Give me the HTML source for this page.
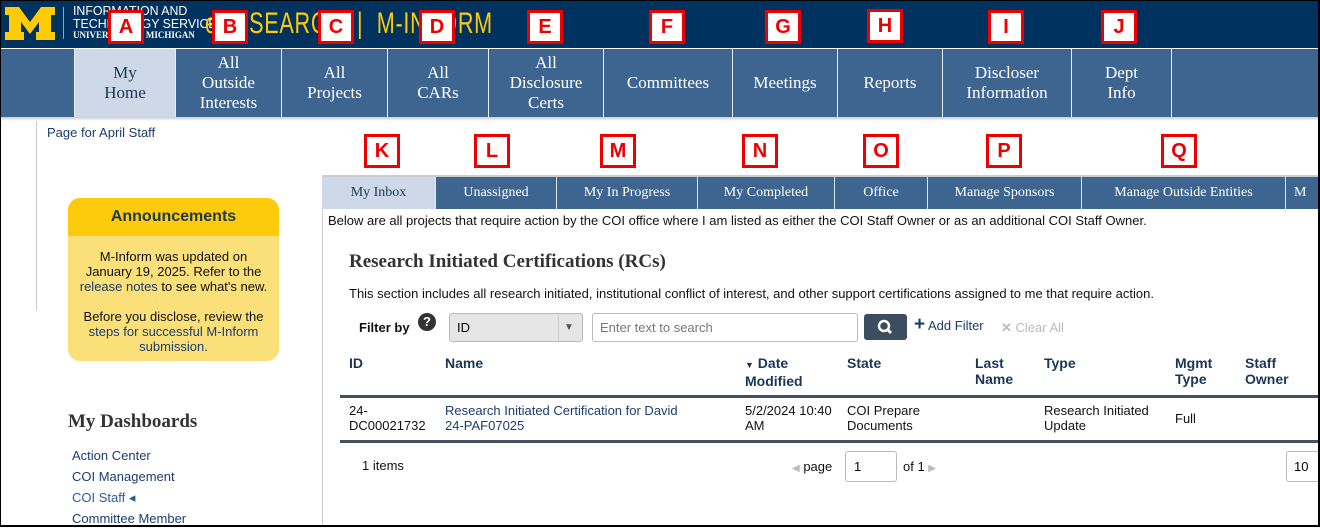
<!DOCTYPE html>
<html><head><meta charset="utf-8"><style>
*{margin:0;padding:0;box-sizing:border-box}
body{width:1320px;height:527px;overflow:hidden;background:#fff;font-family:"Liberation Sans",Arial,sans-serif;position:relative}
.a{position:absolute}
.hdr{left:0;top:0;width:1320px;height:48px;background:#00325f}
.nav{left:0;top:48px;width:1320px;height:69px;background:#3e6590;border-top:1px solid #fff}
.ni{position:absolute;top:0;height:68px;border-left:1px solid #e8eef5;color:#fff;font-family:"Liberation Serif",serif;font-size:17px;line-height:20px;display:flex;align-items:center;justify-content:center;text-align:center}
.lab{position:absolute;width:36px;height:34px;background:#fff;border:3px solid #e00;color:#e00;font-weight:bold;font-size:20px;display:flex;align-items:center;justify-content:center}
.tab{position:absolute;top:0;height:32px;border-left:1px solid #e0e6ee;color:#fff;font-family:"Liberation Serif",serif;font-size:14px;display:flex;align-items:center;justify-content:center}
.lnk{color:#1b3d6e}
</style></head><body>
<div class="a hdr"></div>
<svg class="a" style="left:5px;top:7px" width="50" height="33" viewBox="0 0 50 33"><path d="M0 0H14L25 15L36 0H50V8H46V25H50V33H31V25H34V15L25 27L16 15V25H19V33H0V25H4V8H0Z" fill="#ffcb05"/></svg>
<div class="a" style="left:63px;top:7px;width:1px;height:32px;background:#8aa"></div>
<div class="a" style="left:73px;top:4px;color:#fff;font-size:13px;line-height:13px;transform:scaleX(.95);transform-origin:left">INFORMATION AND<br>TECHNOLOGY SERVICES</div>
<div class="a" style="left:73px;top:30px;color:#fff;font-family:'Liberation Serif',serif;font-size:9px;font-weight:bold">UNIVERSITY OF MICHIGAN</div>
<div class="a" style="left:205px;top:6px;color:#ffcb05;font-size:30px;line-height:36px;transform:scaleX(.72);transform-origin:left;letter-spacing:1px">eRESEARCH&nbsp;&nbsp;|&nbsp;&nbsp;M-INFORM</div>
<div class="a nav">
<div class="ni" style="left:74px;width:101px;background:#cdd8e8;color:#1b3656">My<br>Home</div>
<div class="ni" style="left:175px;width:106px">All<br>Outside<br>Interests</div>
<div class="ni" style="left:281px;width:106px">All<br>Projects</div>
<div class="ni" style="left:387px;width:101px">All<br>CARs</div>
<div class="ni" style="left:488px;width:115px">All<br>Disclosure<br>Certs</div>
<div class="ni" style="left:603px;width:129px">Committees</div>
<div class="ni" style="left:732px;width:105px">Meetings</div>
<div class="ni" style="left:837px;width:105px">Reports</div>
<div class="ni" style="left:942px;width:129px">Discloser<br>Information</div>
<div class="ni" style="left:1071px;width:100px">Dept<br>Info</div>
<div class="ni" style="left:1171px;width:149px"></div>
</div>
<div class="a" style="left:0;top:117px;width:1320px;height:4px;background:linear-gradient(#ccc,#fff)"></div>
<div class="a" style="left:36px;top:121px;width:1px;height:190px;background:#ccc"></div>
<div class="a lnk" style="left:47px;top:125px;font-size:13px">Page for April Staff</div>
<div class="a" style="left:68px;top:198px;width:211px;height:163px;background:#fbe07a;border-radius:12px;overflow:hidden;text-align:center;font-size:13px;line-height:15px;color:#111">
<div style="background:#fecb0c;height:38px;line-height:38px;font-weight:bold;font-size:16px;color:#1b3656">Announcements</div>
<div style="padding-top:13px">M-Inform was updated on<br>January 19, 2025. Refer to the<br><span class="lnk">release notes</span> to see what's new.<br><br>Before you disclose, review the<br><span class="lnk">steps for successful M-Inform<br>submission.</span></div></div>
<div class="a" style="left:68px;top:411px;font-family:'Liberation Serif',serif;font-weight:bold;font-size:19px;color:#333">My Dashboards</div>
<div class="a lnk" style="left:72px;top:445px;font-size:13px;line-height:21px">Action Center<br>COI Management<br><span style="color:#2a5aa0">COI Staff ◂</span><br>Committee Member</div>
<div class="a" style="left:322px;top:175px;width:998px;height:2px;background:#ccc"></div>
<div class="a" style="left:322px;top:177px;width:1px;height:350px;background:#ccc"></div>
<div class="a" style="left:322px;top:177px;width:998px;height:32px;background:#3e6590">
<div class="tab" style="left:0;width:113px;background:#cdd8e8;color:#1b3656;border:none">My Inbox</div>
<div class="tab" style="left:113px;width:121px">Unassigned</div>
<div class="tab" style="left:234px;width:141px">My In Progress</div>
<div class="tab" style="left:375px;width:137px">My Completed</div>
<div class="tab" style="left:512px;width:93px">Office</div>
<div class="tab" style="left:605px;width:154px">Manage Sponsors</div>
<div class="tab" style="left:759px;width:204px">Manage Outside Entities</div>
<div class="tab" style="left:963px;width:40px;justify-content:flex-start;padding-left:8px">M</div>
</div>
<div class="a" style="left:328px;top:213px;font-size:13px;color:#111">Below are all projects that require action by the COI office where I am listed as either the COI Staff Owner or as an additional COI Staff Owner.</div>
<div class="a" style="left:349px;top:251px;font-family:'Liberation Serif',serif;font-weight:bold;font-size:19px;color:#333">Research Initiated Certifications (RCs)</div>
<div class="a" style="left:349px;top:286px;font-size:13px;color:#111">This section includes all research initiated, institutional conflict of interest, and other support certifications assigned to me that require action.</div>
<div class="a" style="left:359px;top:320px;font-size:13px;font-weight:bold;color:#111">Filter by</div>
<div class="a" style="left:418px;top:313px;width:18px;height:18px;border-radius:50%;background:#333;color:#fff;font-weight:bold;font-size:13px;text-align:center;line-height:18px">?</div>
<div class="a" style="left:449px;top:313px;width:134px;height:29px;background:#e6e6e6;border:1px solid #bbb;border-radius:3px;font-size:13px;line-height:27px;padding-left:7px">ID<span style="position:absolute;left:108px;top:0;width:1px;height:27px;background:#ccc"></span><span style="position:absolute;left:114px;font-size:10px;color:#555">▼</span></div>
<div class="a" style="left:592px;top:313px;width:266px;height:29px;border:1px solid #bbb;border-radius:3px;font-size:13px;line-height:27px;padding-left:7px;color:#777">Enter text to search</div>
<div class="a" style="left:864px;top:314px;width:43px;height:26px;background:#3b4d5e;border-radius:3px">
<svg width="43" height="26"><circle cx="20" cy="12" r="5" fill="none" stroke="#fff" stroke-width="2.5"/><line x1="23.5" y1="15.5" x2="27" y2="19" stroke="#fff" stroke-width="3"/></svg></div>
<div class="a" style="left:914px;top:318px;font-size:13px;color:#1b3d6e"><b style="font-size:19px;line-height:14px">+</b> Add Filter</div>
<div class="a" style="left:1001px;top:320px;font-size:13px;color:#bbb"><b>✕</b> Clear All</div>
<div class="a" style="left:349px;top:355px;font-size:14px;font-weight:bold;color:#1b3656;line-height:16px">
<span class="a" style="left:0">ID</span><span class="a" style="left:96px">Name</span><span class="a" style="left:396px;white-space:nowrap"><span style="font-size:9px">▼</span> Date<br>Modified</span><span class="a" style="left:498px">State</span><span class="a" style="left:626px">Last<br>Name</span><span class="a" style="left:695px">Type</span><span class="a" style="left:826px">Mgmt<br>Type</span><span class="a" style="left:896px">Staff<br>Owner</span></div>
<div class="a" style="left:340px;top:395px;width:980px;height:3px;background:#44525f"></div>
<div class="a" style="left:349px;top:403px;font-size:13px;color:#111;line-height:15px;white-space:nowrap">
<span class="a" style="left:0">24-<br>DC00021732</span><span class="a lnk" style="left:96px">Research Initiated Certification for David<br>24-PAF07025</span><span class="a" style="left:396px">5/2/2024 10:40<br>AM</span><span class="a" style="left:498px">COI Prepare<br>Documents</span><span class="a" style="left:695px">Research Initiated<br>Update</span><span class="a" style="left:826px;top:8px">Full</span></div>
<div class="a" style="left:340px;top:440px;width:980px;height:3px;background:#44525f"></div>
<div class="a" style="left:362px;top:458px;font-size:13px;color:#111">1 items</div>
<div class="a" style="left:792px;top:459px;font-size:13px;color:#111"><span style="color:#bbb;font-size:10px">◀</span> page</div>
<div class="a" style="left:845px;top:451px;width:52px;height:31px;border:1px solid #bbb;border-radius:3px;font-size:13px;line-height:29px;padding-left:8px">1</div>
<div class="a" style="left:903px;top:459px;font-size:13px;color:#111">of 1 <span style="color:#bbb;font-size:10px">▶</span></div>
<div class="a" style="left:1286px;top:451px;width:40px;height:31px;border:1px solid #bbb;border-radius:3px;font-size:13px;line-height:29px;padding-left:7px">10</div>
<div class="lab" style="left:108px;top:10px">A</div>
<div class="lab" style="left:212px;top:10px">B</div>
<div class="lab" style="left:318px;top:10px">C</div>
<div class="lab" style="left:419px;top:10px">D</div>
<div class="lab" style="left:527px;top:10px">E</div>
<div class="lab" style="left:649px;top:10px">F</div>
<div class="lab" style="left:765px;top:10px">G</div>
<div class="lab" style="left:867px;top:9px">H</div>
<div class="lab" style="left:988px;top:10px">I</div>
<div class="lab" style="left:1101px;top:10px">J</div>
<div class="lab" style="left:364px;top:134px">K</div>
<div class="lab" style="left:474px;top:134px">L</div>
<div class="lab" style="left:600px;top:134px">M</div>
<div class="lab" style="left:742px;top:134px">N</div>
<div class="lab" style="left:863px;top:134px">O</div>
<div class="lab" style="left:986px;top:134px">P</div>
<div class="lab" style="left:1161px;top:134px">Q</div>
<div class="a" style="left:0;top:0;width:1320px;height:527px;border:1px solid #000;border-right-width:2px;border-bottom-width:2px;pointer-events:none"></div>
</body></html>
